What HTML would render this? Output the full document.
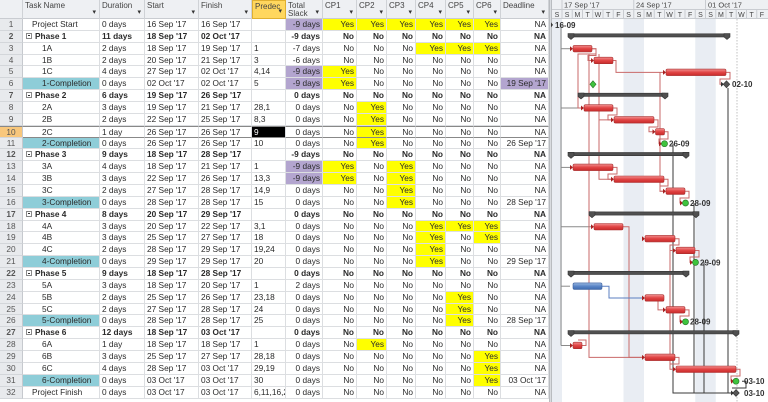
<!DOCTYPE html>
<html><head><meta charset="utf-8">
<style>
*{box-sizing:border-box;margin:0;padding:0}
body{width:768px;height:402px;overflow:hidden;background:#fff;font-family:"Liberation Sans",Arial,sans-serif;font-size:8.3px;color:#2a2a2a;position:relative}
.hd{position:absolute;left:0;top:0;height:19px;width:549px;display:flex;background:#eef0f3;border-bottom:1px solid #c9ccd1}
.hd>span{position:relative;height:19px;border-right:1px solid #cfd2d6;padding:2px 2px;color:#444;font-size:8px;line-height:8px;white-space:nowrap;overflow:hidden}
.hd>span b{position:absolute;right:3px;bottom:2px;font-weight:normal;font-size:7px;color:#333}
.rows{position:absolute;left:0;top:19px;width:549px}
.r{display:flex;height:11.87px;line-height:11.6px}
.r>span,.hd>span{flex:none}
.r>span{border-right:1px solid #dcdee1;border-bottom:1px solid #dcdee1;white-space:nowrap;overflow:hidden;padding:0 2px}
.r>span:nth-child(n+6){text-align:right}
.r>span:nth-child(1){text-align:center;background:#e8eaed;color:#555;border-right:1px solid #c6c9ce;border-bottom:1px solid #d3d6da}
.w1{width:23px}.w2{width:77px}.w3{width:45px}.w4{width:54px}.w5{width:53px}.w6{width:34px}.w7{width:37px}.w8{width:34px}.w9{width:30px}.w10{width:29px}.w11{width:30px}.w12{width:28px}.w13{width:27px}.w14{width:48px}
.r>span:nth-child(2){width:77px}.r>span:nth-child(1){width:23px}.r>span:nth-child(3){width:45px}.r>span:nth-child(4){width:54px}.r>span:nth-child(5){width:53px}.r>span:nth-child(6){width:34px;text-align:left}.r>span:nth-child(7){width:37px}.r>span:nth-child(8){width:34px}.r>span:nth-child(9){width:30px}.r>span:nth-child(10){width:29px}.r>span:nth-child(11){width:30px}.r>span:nth-child(12){width:28px}.r>span:nth-child(13){width:27px}.r>span:nth-child(14){width:48px}
.b{font-weight:bold}
.y{background:#ffff00}
.p{background:#b3a5cf}
.t{background:#8ecdd8}
.l1{padding-left:9px!important}
.l2{padding-left:19px!important}
.l1b{padding-left:3px!important}
.mx{display:inline-block;width:6px;height:6px;border:1px solid #888;margin-right:3px;position:relative;top:0px;background:#fff}
.mx:after{content:"";position:absolute;left:1px;top:1.5px;width:2px;height:1px;background:#333}
.sel>span{border-top:1px solid #888;border-bottom:1px solid #888}
.sep{position:absolute;left:549px;top:0;width:3px;height:402px;background:#d9dce0;border-left:1px solid #b9bcc0;border-right:1px solid #b9bcc0}
</style></head><body>
<div class="hd">
<span class="w1"></span><span class="w2">Task Name<b>▾</b></span><span class="w3">Duration<b>▾</b></span><span class="w4">Start<b>▾</b></span><span class="w5">Finish<b>▾</b></span><span class="w6" style="background:#ffd75e;border:1px solid #e0b030">Predec<b>▾</b></span><span class="w7">Total<br>Slack<b>▾</b></span><span class="w8">CP1<b>▾</b></span><span class="w9">CP2<b>▾</b></span><span class="w10">CP3<b>▾</b></span><span class="w11">CP4<b>▾</b></span><span class="w12">CP5<b>▾</b></span><span class="w13">CP6<b>▾</b></span><span class="w14">Deadline<b>▾</b></span>
</div>
<div class="rows">
<div class="r"><span>1</span><span class="l1">Project Start</span><span>0 days</span><span>16 Sep '17</span><span>16 Sep '17</span><span></span><span class="p">-9 days</span><span class="y">Yes</span><span class="y">Yes</span><span class="y">Yes</span><span class="y">Yes</span><span class="y">Yes</span><span class="y">Yes</span><span>NA</span></div>
<div class="r b"><span>2</span><span class="l1b"><i class="mx"></i>Phase 1</span><span>11 days</span><span>18 Sep '17</span><span>02 Oct '17</span><span></span><span>-9 days</span><span>No</span><span>No</span><span>No</span><span>No</span><span>No</span><span>No</span><span>NA</span></div>
<div class="r"><span>3</span><span class="l2">1A</span><span>2 days</span><span>18 Sep '17</span><span>19 Sep '17</span><span>1</span><span>-7 days</span><span>No</span><span>No</span><span>No</span><span class="y">Yes</span><span class="y">Yes</span><span class="y">Yes</span><span>NA</span></div>
<div class="r"><span>4</span><span class="l2">1B</span><span>2 days</span><span>20 Sep '17</span><span>21 Sep '17</span><span>3</span><span>-6 days</span><span>No</span><span>No</span><span>No</span><span>No</span><span>No</span><span>No</span><span>NA</span></div>
<div class="r"><span>5</span><span class="l2">1C</span><span>4 days</span><span>27 Sep '17</span><span>02 Oct '17</span><span>4,14</span><span class="p">-9 days</span><span class="y">Yes</span><span>No</span><span>No</span><span>No</span><span>No</span><span>No</span><span>NA</span></div>
<div class="r"><span>6</span><span class="l2 t">1-Completion</span><span>0 days</span><span>02 Oct '17</span><span>02 Oct '17</span><span>5</span><span class="p">-9 days</span><span class="y">Yes</span><span>No</span><span>No</span><span>No</span><span>No</span><span>No</span><span class="p">19 Sep '17</span></div>
<div class="r b"><span>7</span><span class="l1b"><i class="mx"></i>Phase 2</span><span>6 days</span><span>19 Sep '17</span><span>26 Sep '17</span><span></span><span>0 days</span><span>No</span><span>No</span><span>No</span><span>No</span><span>No</span><span>No</span><span>NA</span></div>
<div class="r"><span>8</span><span class="l2">2A</span><span>3 days</span><span>19 Sep '17</span><span>21 Sep '17</span><span>28,1</span><span>0 days</span><span>No</span><span class="y">Yes</span><span>No</span><span>No</span><span>No</span><span>No</span><span>NA</span></div>
<div class="r"><span>9</span><span class="l2">2B</span><span>2 days</span><span>22 Sep '17</span><span>25 Sep '17</span><span>8,3</span><span>0 days</span><span>No</span><span class="y">Yes</span><span>No</span><span>No</span><span>No</span><span>No</span><span>NA</span></div>
<div class="r sel"><span style="background:#f8c77c">10</span><span class="l2">2C</span><span>1 day</span><span>26 Sep '17</span><span>26 Sep '17</span><span style="background:#000;color:#fff">9</span><span>0 days</span><span>No</span><span class="y">Yes</span><span>No</span><span>No</span><span>No</span><span>No</span><span>NA</span></div>
<div class="r"><span>11</span><span class="l2 t">2-Completion</span><span>0 days</span><span>26 Sep '17</span><span>26 Sep '17</span><span>10</span><span>0 days</span><span>No</span><span class="y">Yes</span><span>No</span><span>No</span><span>No</span><span>No</span><span>26 Sep '17</span></div>
<div class="r b"><span>12</span><span class="l1b"><i class="mx"></i>Phase 3</span><span>9 days</span><span>18 Sep '17</span><span>28 Sep '17</span><span></span><span>-9 days</span><span>No</span><span>No</span><span>No</span><span>No</span><span>No</span><span>No</span><span>NA</span></div>
<div class="r"><span>13</span><span class="l2">3A</span><span>4 days</span><span>18 Sep '17</span><span>21 Sep '17</span><span>1</span><span class="p">-9 days</span><span class="y">Yes</span><span>No</span><span class="y">Yes</span><span>No</span><span>No</span><span>No</span><span>NA</span></div>
<div class="r"><span>14</span><span class="l2">3B</span><span>3 days</span><span>22 Sep '17</span><span>26 Sep '17</span><span>13,3</span><span class="p">-9 days</span><span class="y">Yes</span><span>No</span><span class="y">Yes</span><span>No</span><span>No</span><span>No</span><span>NA</span></div>
<div class="r"><span>15</span><span class="l2">3C</span><span>2 days</span><span>27 Sep '17</span><span>28 Sep '17</span><span>14,9</span><span>0 days</span><span>No</span><span>No</span><span class="y">Yes</span><span>No</span><span>No</span><span>No</span><span>NA</span></div>
<div class="r"><span>16</span><span class="l2 t">3-Completion</span><span>0 days</span><span>28 Sep '17</span><span>28 Sep '17</span><span>15</span><span>0 days</span><span>No</span><span>No</span><span class="y">Yes</span><span>No</span><span>No</span><span>No</span><span>28 Sep '17</span></div>
<div class="r b"><span>17</span><span class="l1b"><i class="mx"></i>Phase 4</span><span>8 days</span><span>20 Sep '17</span><span>29 Sep '17</span><span></span><span>0 days</span><span>No</span><span>No</span><span>No</span><span>No</span><span>No</span><span>No</span><span>NA</span></div>
<div class="r"><span>18</span><span class="l2">4A</span><span>3 days</span><span>20 Sep '17</span><span>22 Sep '17</span><span>3,1</span><span>0 days</span><span>No</span><span>No</span><span>No</span><span class="y">Yes</span><span class="y">Yes</span><span class="y">Yes</span><span>NA</span></div>
<div class="r"><span>19</span><span class="l2">4B</span><span>3 days</span><span>25 Sep '17</span><span>27 Sep '17</span><span>18</span><span>0 days</span><span>No</span><span>No</span><span>No</span><span class="y">Yes</span><span>No</span><span class="y">Yes</span><span>NA</span></div>
<div class="r"><span>20</span><span class="l2">4C</span><span>2 days</span><span>28 Sep '17</span><span>29 Sep '17</span><span>19,24</span><span>0 days</span><span>No</span><span>No</span><span>No</span><span class="y">Yes</span><span>No</span><span>No</span><span>NA</span></div>
<div class="r"><span>21</span><span class="l2 t">4-Completion</span><span>0 days</span><span>29 Sep '17</span><span>29 Sep '17</span><span>20</span><span>0 days</span><span>No</span><span>No</span><span>No</span><span class="y">Yes</span><span>No</span><span>No</span><span>29 Sep '17</span></div>
<div class="r b"><span>22</span><span class="l1b"><i class="mx"></i>Phase 5</span><span>9 days</span><span>18 Sep '17</span><span>28 Sep '17</span><span></span><span>0 days</span><span>No</span><span>No</span><span>No</span><span>No</span><span>No</span><span>No</span><span>NA</span></div>
<div class="r"><span>23</span><span class="l2">5A</span><span>3 days</span><span>18 Sep '17</span><span>20 Sep '17</span><span>1</span><span>2 days</span><span>No</span><span>No</span><span>No</span><span>No</span><span>No</span><span>No</span><span>NA</span></div>
<div class="r"><span>24</span><span class="l2">5B</span><span>2 days</span><span>25 Sep '17</span><span>26 Sep '17</span><span>23,18</span><span>0 days</span><span>No</span><span>No</span><span>No</span><span>No</span><span class="y">Yes</span><span>No</span><span>NA</span></div>
<div class="r"><span>25</span><span class="l2">5C</span><span>2 days</span><span>27 Sep '17</span><span>28 Sep '17</span><span>24</span><span>0 days</span><span>No</span><span>No</span><span>No</span><span>No</span><span class="y">Yes</span><span>No</span><span>NA</span></div>
<div class="r"><span>26</span><span class="l2 t">5-Completion</span><span>0 days</span><span>28 Sep '17</span><span>28 Sep '17</span><span>25</span><span>0 days</span><span>No</span><span>No</span><span>No</span><span>No</span><span class="y">Yes</span><span>No</span><span>28 Sep '17</span></div>
<div class="r b"><span>27</span><span class="l1b"><i class="mx"></i>Phase 6</span><span>12 days</span><span>18 Sep '17</span><span>03 Oct '17</span><span></span><span>0 days</span><span>No</span><span>No</span><span>No</span><span>No</span><span>No</span><span>No</span><span>NA</span></div>
<div class="r"><span>28</span><span class="l2">6A</span><span>1 day</span><span>18 Sep '17</span><span>18 Sep '17</span><span>1</span><span>0 days</span><span>No</span><span class="y">Yes</span><span>No</span><span>No</span><span>No</span><span>No</span><span>NA</span></div>
<div class="r"><span>29</span><span class="l2">6B</span><span>3 days</span><span>25 Sep '17</span><span>27 Sep '17</span><span>28,18</span><span>0 days</span><span>No</span><span>No</span><span>No</span><span>No</span><span>No</span><span class="y">Yes</span><span>NA</span></div>
<div class="r"><span>30</span><span class="l2">6C</span><span>4 days</span><span>28 Sep '17</span><span>03 Oct '17</span><span>29,19</span><span>0 days</span><span>No</span><span>No</span><span>No</span><span>No</span><span>No</span><span class="y">Yes</span><span>NA</span></div>
<div class="r"><span>31</span><span class="l2 t">6-Completion</span><span>0 days</span><span>03 Oct '17</span><span>03 Oct '17</span><span>30</span><span>0 days</span><span>No</span><span>No</span><span>No</span><span>No</span><span>No</span><span class="y">Yes</span><span>03 Oct '17</span></div>
<div class="r"><span>32</span><span class="l1">Project Finish</span><span>0 days</span><span>03 Oct '17</span><span>03 Oct '17</span><span>6,11,16,2</span><span>0 days</span><span>No</span><span>No</span><span>No</span><span>No</span><span>No</span><span>No</span><span>NA</span></div>
</div>
<div class="sep"></div>
<svg style="position:absolute;left:0;top:0" width="768" height="402" viewBox="0 0 768 402" font-family="Liberation Sans, Arial, sans-serif">
<defs>
<linearGradient id="rg" x1="0" y1="0" x2="0" y2="1"><stop offset="0" stop-color="#f39090"/><stop offset=".5" stop-color="#e04444"/><stop offset="1" stop-color="#c82a2a"/></linearGradient>
<linearGradient id="bg" x1="0" y1="0" x2="0" y2="1"><stop offset="0" stop-color="#9cb8e0"/><stop offset=".5" stop-color="#5b86c8"/><stop offset="1" stop-color="#3f6aae"/></linearGradient>
</defs>
<!-- weekend shading -->
<rect x="552" y="19" width="10" height="383" fill="#e9edf3"/>
<rect x="623.5" y="19" width="20.5" height="383" fill="#e9edf3"/>
<rect x="695.25" y="19" width="20.5" height="383" fill="#e9edf3"/>
<line x1="737" y1="19" x2="737" y2="402" stroke="#c0c0c0" stroke-dasharray="1.5,1.5"/>
<!-- header -->
<rect x="552" y="0" width="216" height="19" fill="#eef0f3"/>
<line x1="552" y1="9.5" x2="768" y2="9.5" stroke="#c9ccd1"/>
<line x1="552" y1="18.5" x2="768" y2="18.5" stroke="#c9ccd1"/>
<g stroke="#c9ccd1"><line x1="562" y1="0" x2="562" y2="19"/><line x1="633.75" y1="0" x2="633.75" y2="19"/><line x1="705.5" y1="0" x2="705.5" y2="19"/></g>
<g font-size="7.5" fill="#444"><text x="564" y="7.5">17 Sep '17</text><text x="636" y="7.5">24 Sep '17</text><text x="708" y="7.5">01 Oct '17</text></g>
<g stroke="#c9ccd1">
<line x1="572.25" y1="9.5" x2="572.25" y2="19"/><line x1="582.5" y1="9.5" x2="582.5" y2="19"/><line x1="592.75" y1="9.5" x2="592.75" y2="19"/><line x1="603" y1="9.5" x2="603" y2="19"/><line x1="613.25" y1="9.5" x2="613.25" y2="19"/><line x1="623.5" y1="9.5" x2="623.5" y2="19"/><line x1="644" y1="9.5" x2="644" y2="19"/><line x1="654.25" y1="9.5" x2="654.25" y2="19"/><line x1="664.5" y1="9.5" x2="664.5" y2="19"/><line x1="674.75" y1="9.5" x2="674.75" y2="19"/><line x1="685" y1="9.5" x2="685" y2="19"/><line x1="695.25" y1="9.5" x2="695.25" y2="19"/><line x1="715.75" y1="9.5" x2="715.75" y2="19"/><line x1="726" y1="9.5" x2="726" y2="19"/><line x1="736.25" y1="9.5" x2="736.25" y2="19"/><line x1="746.5" y1="9.5" x2="746.5" y2="19"/><line x1="756.75" y1="9.5" x2="756.75" y2="19"/>
</g>
<g font-size="7" fill="#444" text-anchor="middle">
<text x="557" y="17">S</text><text x="567.1" y="17">S</text><text x="577.4" y="17">M</text><text x="587.6" y="17">T</text><text x="597.9" y="17">W</text><text x="608.1" y="17">T</text><text x="618.4" y="17">F</text><text x="628.6" y="17">S</text><text x="638.9" y="17">S</text><text x="649.1" y="17">M</text><text x="659.4" y="17">T</text><text x="669.6" y="17">W</text><text x="679.9" y="17">T</text><text x="690.1" y="17">F</text><text x="700.4" y="17">S</text><text x="710.6" y="17">S</text><text x="720.9" y="17">M</text><text x="731.1" y="17">T</text><text x="741.4" y="17">W</text><text x="751.6" y="17">T</text><text x="761.9" y="17">F</text>
</g>
<!-- gray links from project start -->
<g stroke="#8a8a8a" fill="none" stroke-width="1">
<path d="M561,25V345.5"/><path d="M561,48.7H570"/><path d="M561,108H581"/><path d="M561,167.4H570"/><path d="M561,226.8H591"/><path d="M561,286.2H570"/><path d="M561,345.5H570"/>
</g>
<!-- black links to finish -->
<g stroke="#3a3a3a" fill="none" stroke-width="1">
<path d="M728,88V393"/><path d="M673,143.7V393H734"/><path d="M694,203V393"/><path d="M704,262.4V393"/>
<path d="M742,381.2h4V388H732"/>
</g>
<!-- red links -->
<g stroke="#c96a6a" fill="none" stroke-width="1">
<path d="M592,48.7h4V55.5H588V60.5H592"/>
<path d="M613,60.5h3V72.4H664"/>
<path d="M726,72.4h4V79H720V84.3H723"/>
<path d="M592,48.7h4V54H578V108H582"/>
<path d="M582,345.5h4V340H578"/>
<path d="M589,54V357.4H643"/>
<path d="M599,54V119.9H612"/>
<path d="M599,119.9V179.3H612"/>
<path d="M613,108h4V115H608V119.9H612"/>
<path d="M654,119.9h4V127H649V131.8H653"/>
<path d="M664,131.8h4V139H659V143.7H661"/>
<path d="M660,72.4V191.2H663"/>
<path d="M613,167.4h4V174H608V179.3H612"/>
<path d="M664,179.3h4V186H660V191.2H663"/>
<path d="M685,191.2h4V198H680V203H682"/>
<path d="M623,226.8h6V357.4H643"/>
<path d="M629,298H643"/>
<path d="M675,238.7h4V245H670V369.3H674"/>
<path d="M670,250.5H674"/>
<path d="M695,250.5h4V257H690V262.4H692"/>
<path d="M654,298h4V309.9H663"/>
<path d="M685,309.9h4V316H680V321.8H682"/>
<path d="M675,357.4h4V364H670"/>
<path d="M736,369.3h4V376H731V381.2H733"/>
</g>
<path d="M602,286.2h7V298H643" stroke="#5b7fc0" fill="none"/>
<!-- summary bars -->
<g fill="#505050" stroke="#333" stroke-width=".6">
<rect x="571" y="33.8" width="156" height="3.2"/><path d="M568,33.5h6v3.5l-3,2.5l-3,-2.5z"/><path d="M724,33.5h6v3.5l-3,2.5l-3,-2.5z"/>
<rect x="581" y="93.2" width="84" height="3.2"/><path d="M578,93h6v3.5l-3,2.5l-3,-2.5z"/><path d="M662,93h6v3.5l-3,2.5l-3,-2.5z"/>
<rect x="571" y="152.5" width="115" height="3.2"/><path d="M568,152.3h6v3.5l-3,2.5l-3,-2.5z"/><path d="M683,152.3h6v3.5l-3,2.5l-3,-2.5z"/>
<rect x="592" y="211.9" width="104" height="3.2"/><path d="M589,211.7h6v3.5l-3,2.5l-3,-2.5z"/><path d="M693,211.7h6v3.5l-3,2.5l-3,-2.5z"/>
<rect x="571" y="271.3" width="115" height="3.2"/><path d="M568,271.1h6v3.5l-3,2.5l-3,-2.5z"/><path d="M683,271.1h6v3.5l-3,2.5l-3,-2.5z"/>
<rect x="571" y="330.7" width="165" height="3.2"/><path d="M568,330.5h6v3.5l-3,2.5l-3,-2.5z"/><path d="M733,330.5h6v3.5l-3,2.5l-3,-2.5z"/>
</g>
<!-- task bars -->
<g fill="url(#rg)" stroke="#a83030" stroke-width=".6">
<rect x="573" y="45.4" width="19" height="6.5" rx="1.5"/>
<rect x="594" y="57.2" width="19" height="6.5" rx="1.5"/>
<rect x="666" y="69.1" width="60" height="6.5" rx="1.5"/>
<rect x="584" y="104.7" width="29" height="6.5" rx="1.5"/>
<rect x="614" y="116.6" width="40" height="6.5" rx="1.5"/>
<rect x="655.5" y="128.5" width="9" height="6.5" rx="1.5"/>
<rect x="573" y="164.1" width="40" height="6.5" rx="1.5"/>
<rect x="614" y="176" width="50" height="6.5" rx="1.5"/>
<rect x="666" y="187.9" width="19" height="6.5" rx="1.5"/>
<rect x="594" y="223.5" width="29" height="6.5" rx="1.5"/>
<rect x="645" y="235.4" width="30" height="6.5" rx="1.5"/>
<rect x="676" y="247.2" width="19" height="6.5" rx="1.5"/>
<rect x="645" y="294.7" width="19" height="6.5" rx="1.5"/>
<rect x="666" y="306.6" width="19" height="6.5" rx="1.5"/>
<rect x="573" y="342.2" width="9" height="6.5" rx="1.5"/>
<rect x="645" y="354.1" width="30" height="6.5" rx="1.5"/>
<rect x="676" y="366" width="60" height="6.5" rx="1.5"/>
</g>
<rect x="573" y="282.9" width="29" height="6.5" rx="1.5" fill="url(#bg)" stroke="#3a5f9e" stroke-width=".6"/>
<!-- link arrowheads -->
<g fill="#a82020">
<path d="M570,46.2v5l3,-2.5z"/><path d="M591,58v5l3,-2.5z"/><path d="M663,69.9v5l3,-2.5z"/><path d="M581,105.5v5l3,-2.5z"/><path d="M611,117.4v5l3,-2.5z"/><path d="M652.5,129.3v5l3,-2.5z"/><path d="M570,164.9v5l3,-2.5z"/><path d="M611,176.8v5l3,-2.5z"/><path d="M663,188.7v5l3,-2.5z"/><path d="M591,224.3v5l3,-2.5z"/><path d="M642,236.2v5l3,-2.5z"/><path d="M673,248v5l3,-2.5z"/><path d="M642,295.5v5l3,-2.5z"/><path d="M663,307.4v5l3,-2.5z"/><path d="M570,343v5l3,-2.5z"/><path d="M642,354.9v5l3,-2.5z"/><path d="M673,366.8v5l3,-2.5z"/>
<path d="M659,141.2v5l3,-2.5z"/><path d="M680,200.5v5l3,-2.5z"/><path d="M690,259.9v5l3,-2.5z"/><path d="M680,319.3v5l3,-2.5z"/><path d="M731,378.7v5l3,-2.5z"/>
</g>
<path d="M721,81.8v5l3,-2.5z" fill="#333"/><path d="M731,390.5v5l3,-2.5z" fill="#333"/><path d="M551,22.4v5l2,-2.5z" fill="#333"/>
<!-- milestones -->
<g fill="#3ec43e" stroke="#2a7a2a" stroke-width=".7">
<circle cx="664.5" cy="143.7" r="3"/><circle cx="685.5" cy="203" r="3"/><circle cx="695.5" cy="262.4" r="3"/><circle cx="685.5" cy="321.8" r="3"/><circle cx="736" cy="381.2" r="3"/>
<path d="M593,80.8l3,3.5l-3,3.5l-3,-3.5z"/>
</g>
<g fill="#555" stroke="#333" stroke-width=".6">
<path d="M726.5,80.8l3.3,3.5l-3.3,3.5l-3.3,-3.5z"/><path d="M736,389.5l3.3,3.5l-3.3,3.5l-3.3,-3.5z"/>
</g>
<g font-size="8" font-weight="bold" fill="#333">
<text x="555" y="27.8">16-09</text>
<text x="732" y="87.2">02-10</text>
<text x="669" y="146.6">26-09</text>
<text x="690" y="205.9">28-09</text>
<text x="700" y="265.3">29-09</text>
<text x="690" y="324.7">28-09</text>
<text x="744" y="384.1">03-10</text>
<text x="744" y="395.9">03-10</text>
</g>
</svg>
</body></html>
